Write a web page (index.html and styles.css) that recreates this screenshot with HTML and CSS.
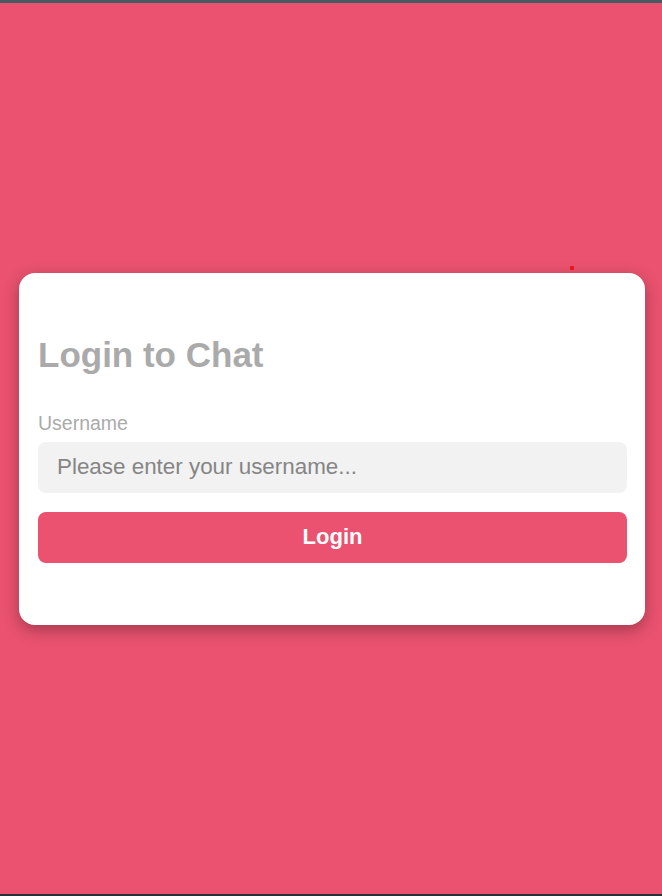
FILE: index.html
```html
<!DOCTYPE html>
<html lang="en">
  <head>
    <meta charset="UTF-8" />
    <meta name="viewport" content="width=device-width, initial-scale=1.0" />
    <title>Login to Chat</title>
    <link rel="stylesheet" href="styles.css">
  </head>
  <body>
    <div class="page">
      <div class="login-card">
        <span class="dot"></span>
        <h2 class="title">Login to Chat</h2>
        <form class="login-form" onsubmit="return false;">
          <label class="label" for="username">Username</label>
          <input
            class="input"
            id="username"
            type="text"
            placeholder="Please enter your username..." />
          <button class="btn" type="submit">Login</button>
        </form>
      </div>
    </div>
  </body>
</html>
```

FILE: styles.css
```css
* {
  box-sizing: border-box;
}

html,
body {
  margin: 0;
  height: 100%;
}

body {
  background-color: #ea526f;
  border-top: 3px solid #455a64;
  border-bottom: 2px solid #263238;
  font-family: "Liberation Sans", Arial, Helvetica, sans-serif;
}

.page {
  height: 100%;
  display: flex;
  align-items: center;
}

.login-card {
  position: relative;
  width: 626px;
  margin-left: 19px;
  padding: 62px 18px 62px 19px;
  background-color: white;
  border-radius: 16px;
  box-shadow: 0 5px 16px rgba(0, 0, 0, 0.3);
}

.dot {
  display: block;
  position: absolute;
  top: -7px;
  right: 71px;
  width: 4px;
  height: 4px;
  border-radius: 1px;
  background-color: #e8141a;
}

.title {
  margin: 0 0 37px;
  font-size: 35px;
  font-weight: bold;
  color: #aaaaaa;
}

.login-form {
  display: flex;
  flex-direction: column;
}

.label {
  font-size: 19.5px;
  color: #aaaaaa;
  margin-bottom: 7px;
}

.input {
  height: 51px;
  padding: 0 19px;
  border: none;
  border-radius: 8px;
  background-color: #f2f2f2;
  font-family: inherit;
  font-size: 22.4px;
  color: #555;
  outline: none;
}

.input::placeholder {
  color: #858585;
}

.btn {
  height: 51px;
  margin-top: 19px;
  border: none;
  border-radius: 8px;
  background-color: #ea526f;
  color: white;
  font-family: inherit;
  font-size: 22px;
  font-weight: bold;
  cursor: pointer;
}
```
